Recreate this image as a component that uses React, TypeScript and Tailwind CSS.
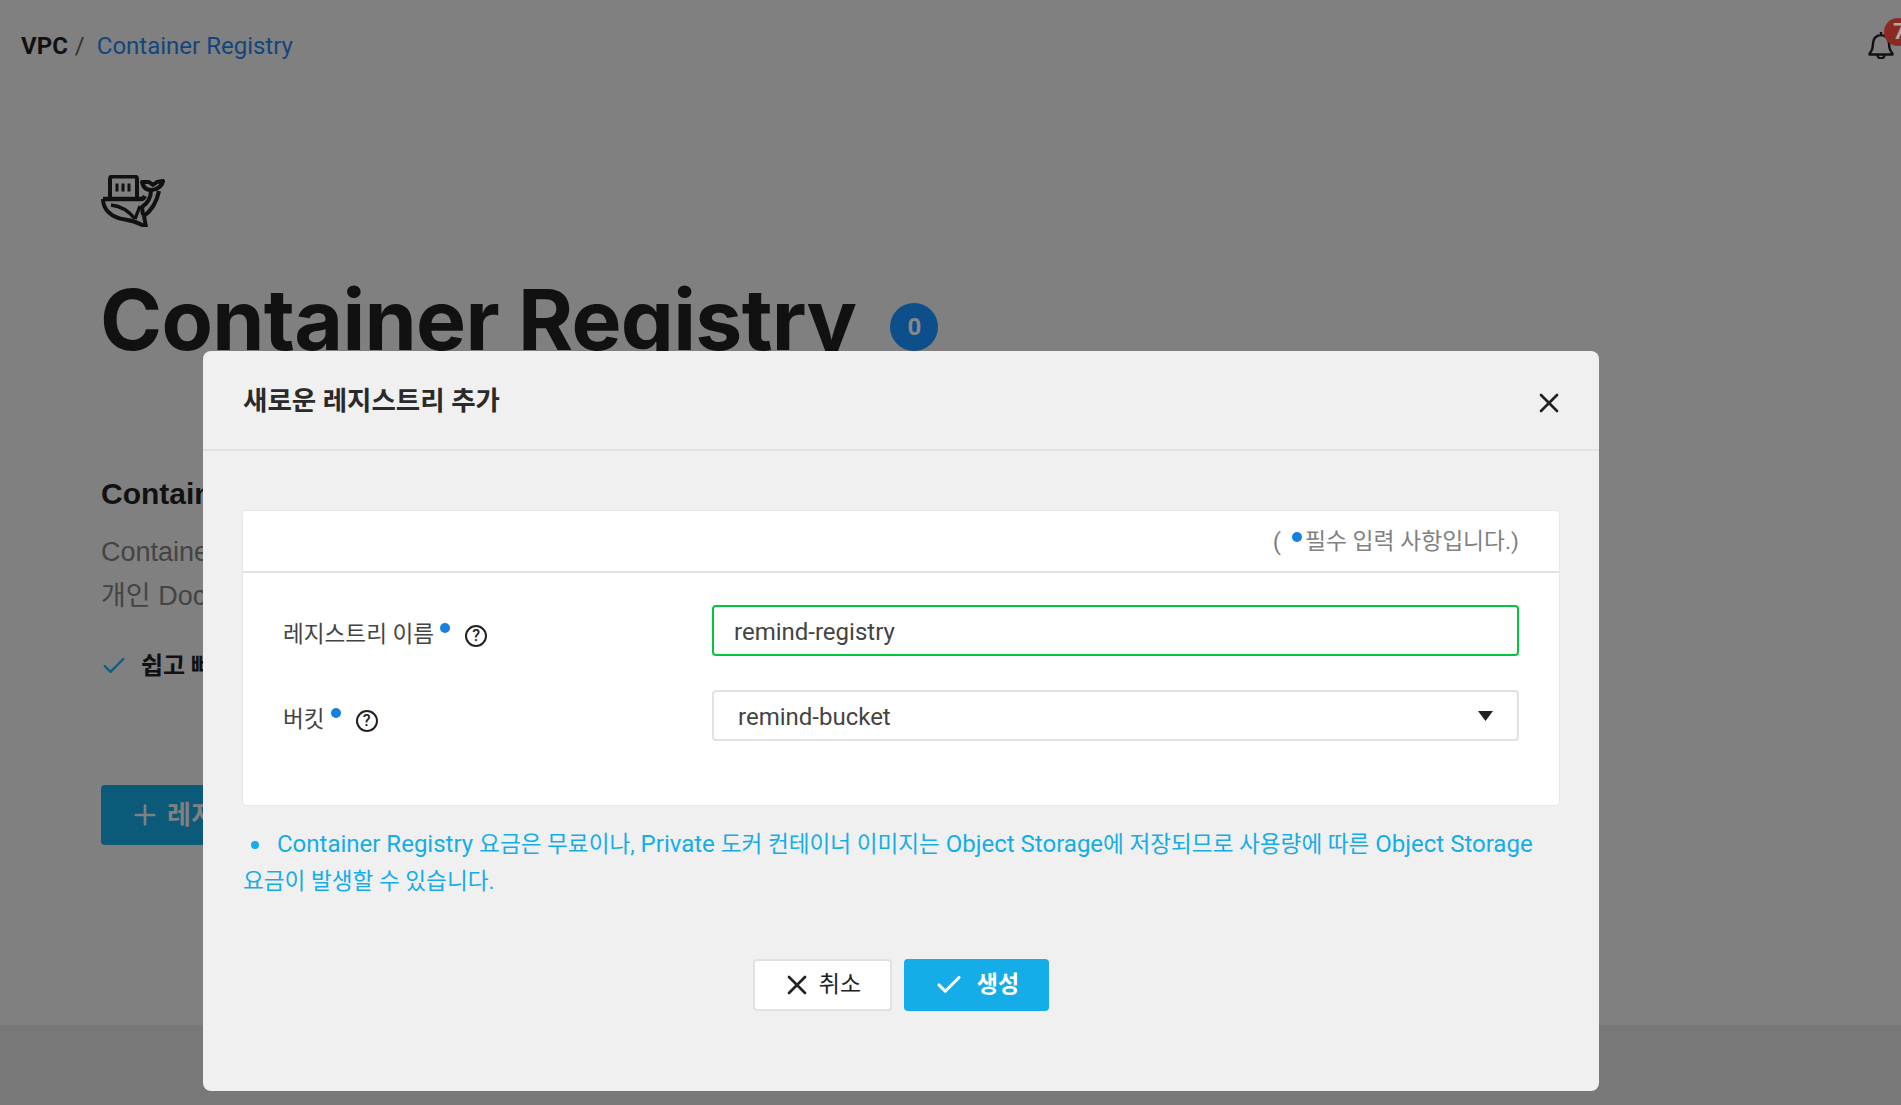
import React from "react";
import { Check, Plus, X } from "lucide-react";

const kr = "font-['Roboto','Noto_Sans_CJK_KR',sans-serif]";

const WhaleIcon = () => (
  <svg width="64" height="52" viewBox="6 7 64 52" fill="none" stroke="#111" strokeWidth="4" strokeLinejoin="round">
    <path d="M15 29V11q0-2.500 2.500-2.500h22q2.500 0 2.500 2.500v18" />
    <path d="M22 15.500v8M28 15.500v8M34 15.500v8" strokeWidth="3" />
    <path d="M8 31h38c2 0 3-1 4-3" strokeWidth="4.500" />
    <path d="M8 31c0 11 9 19 22 20.500 8 1 15 4 21 7.500l-2-11c8-6 13-15 15-25" />
    <path d="M47 14c1 5 4 8 9 8 6 0 11-4 12-9l-6 1-4 3-4-3z" />
    <path d="M56 22c0 8-3 13-9 17l1 8" />
    <path d="M16 37c9 1 18 6 24 14" strokeWidth="3.400" />
    <path d="M40 51l5-13" strokeWidth="3.400" />
  </svg>
);

const BellIcon = () => (
  <svg width="26" height="28" viewBox="0 0 26 28" fill="none" stroke="#111" strokeWidth="2.400" strokeLinejoin="round">
    <path d="M13 1v3M5 12a8 8 0 0 1 16 0c0 6 1 8 3.500 10.500v1H1.500v-1C4 20 5 18 5 12z" />
    <path d="M9.500 24a3.500 3.500 0 0 0 7 0" />
  </svg>
);

const HelpIcon = () => (
  <span className="ml-[15px] mt-[2px] inline-flex h-[22px] w-[22px] items-center justify-center rounded-full border-2 border-[#222] font-['Roboto'] text-[16px] font-medium leading-none text-[#222]">
    ?
  </span>
);

const Dot = () => <span className="ml-[6px] mb-[14px] inline-block h-[10px] w-[10px] rounded-full bg-[#1480e0]" />;

const FieldLabel = ({ text }: { text: string }) => (
  <div className="flex w-[429px] shrink-0 items-center pt-[9px] text-[22.600px] text-[#444]">
    <span>{text}</span>
    <Dot />
    <HelpIcon />
  </div>
);

const K = ({ children }: { children: React.ReactNode }) => <span className="text-[22.600px]">{children}</span>;

export default function App() {
  return (
    <div className={`relative h-[1105px] w-full overflow-hidden bg-[#808080] ${kr}`}>
      {/* page behind the dim layer */}
      <div className="flex h-[1025px] flex-col">
        <header className="flex h-[90px] items-center justify-between pl-[21px]">
          <div className="mt-[1px] flex items-center text-[24px]">
            <span className="font-bold text-[#111]">VPC</span>
            <span className="ml-[7px] text-[#333]">/</span>
            <span className="ml-[12px] text-[#12467c]">Container Registry</span>
          </div>
          <div className="relative -mt-[1px] mr-[7px]">
            <BellIcon />
            <span className="absolute -top-[13px] left-[16px] flex h-[28px] w-[28px] items-center rounded-full bg-[#8c2a22] pl-[9px] text-[22px] font-bold text-[#aaa]">7</span>
          </div>
        </header>
        <main className="pl-[101px] pt-[85px]">
          <WhaleIcon />
          <div className="mt-[43px] flex items-center">
            <h1 className="-ml-[1px] font-['Inter'] text-[84px] font-bold leading-[100px] tracking-[-0.700px] text-[#111]">Container Registry</h1>
            <span className="ml-[34px] mt-[14px] flex h-[48px] w-[48px] items-center justify-center rounded-full bg-[#0d4f8a] text-[24px] font-bold text-[#888]">0</span>
          </div>
          <h2 className="mt-[101px] font-['Liberation_Sans','Noto_Sans_CJK_KR'] text-[30px] font-bold text-[#111]">Container Registry</h2>
          <p className="mt-[14px] font-['Liberation_Sans','Noto_Sans_CJK_KR'] text-[27px] leading-[44px] text-[#444]">
            Container Registry
            <br />
            개인 Docker
          </p>
          <div className="mt-[30px] flex items-center gap-[13px]">
            <Check size={28} color="#0d5f80" strokeWidth={2} className="-ml-[1px]" />
            <span className="text-[24px] font-bold text-[#111]">쉽고 빠른</span>
          </div>
          <button className="mt-[101px] flex h-[60px] w-[300px] items-center rounded-[4px] bg-[#0b5a7a] pl-[28px] text-[26px] font-bold text-[#808080]">
            <Plus size={32} className="mr-[6px]" />
            레지스트리
          </button>
        </main>
      </div>
      <div className="h-[80px] bg-[#787878]" />

      {/* modal */}
      <div className="absolute left-[203px] top-[351px] flex h-[740px] w-[1396px] flex-col rounded-[8px] bg-[#f0f0f0]">
        <div className="flex h-[100px] shrink-0 items-center justify-between border-b-2 border-[#e2e2e2] pl-[40px] pr-[34px]">
          <h3 className="mt-[1px] text-[26.500px] font-bold text-[#2a2a2a]">새로운 레지스트리 추가</h3>
          <X size={32} strokeWidth={2} color="#222" className="mt-[6px]" />
        </div>
        <div className="px-[40px] pt-[60px]">
          <div className="rounded-[4px] bg-white shadow-[0_0_0_1px_#e8e8e8]">
            <div className="flex h-[62px] items-center justify-end border-b-2 border-[#e2e2e2] pr-[40px] pt-[2px] text-[22.800px] text-[#808080]">
              <span className="text-[24px]">(</span>
              <span className="ml-[11px] mb-[10px] h-[10px] w-[10px] rounded-full bg-[#1480e0]" />
              <span className="ml-[3px]">필수 입력 사항입니다.)</span>
            </div>
            <div className="flex flex-col gap-[34px] px-[40px] pb-[64px] pt-[32px]">
              <div className="flex items-center">
                <FieldLabel text="레지스트리 이름" />
                <div className="flex h-[51px] flex-1 items-center rounded-[4px] border-2 border-[#00c73c] pl-[20px] pt-[2px] text-[24px] text-[#444]">remind-registry</div>
              </div>
              <div className="flex items-center">
                <FieldLabel text="버킷" />
                <div className="flex h-[51px] flex-1 items-center justify-between rounded-[4px] border-2 border-[#e2e2e2] pl-[24px] pr-[24px] pt-[2px] text-[24px] text-[#444]">
                  remind-bucket
                  <svg width="15" height="10" viewBox="0 0 15 10" className="-mt-[2px]"><path d="M0 0h15L7.500 10z" fill="#222" /></svg>
                </div>
              </div>
            </div>
          </div>
          <p className="mt-[21px] text-[24px] leading-[36px] text-[#14ade8]">
            <span className="ml-[8px] mr-[18px] inline-block h-[8px] w-[8px] -translate-y-[3px] rounded-full bg-[#14ade8]" />
            Container Registry <K>요금은 무료이나,</K> Private <K>도커 컨테이너 이미지는</K> Object Storage<K>에 저장되므로 사용량에 따른</K> Object Storage <K>요금이 발생할 수 있습니다.</K>
          </p>
          <div className="mt-[59px] flex justify-center gap-[12px]">
            <button className="flex h-[52px] w-[139px] items-center justify-center gap-[6px] rounded-[4px] border-2 border-[#e2e2e2] bg-white pr-[3px] text-[23px] text-[#222]">
              <X size={32} strokeWidth={2} />
              취소
            </button>
            <button className="flex h-[52px] w-[145px] items-center justify-center gap-[13px] rounded-[4px] bg-[#14ade8] text-[23px] font-bold text-white">
              <Check size={30} strokeWidth={2.500} />
              생성
            </button>
          </div>
        </div>
      </div>
    </div>
  );
}
